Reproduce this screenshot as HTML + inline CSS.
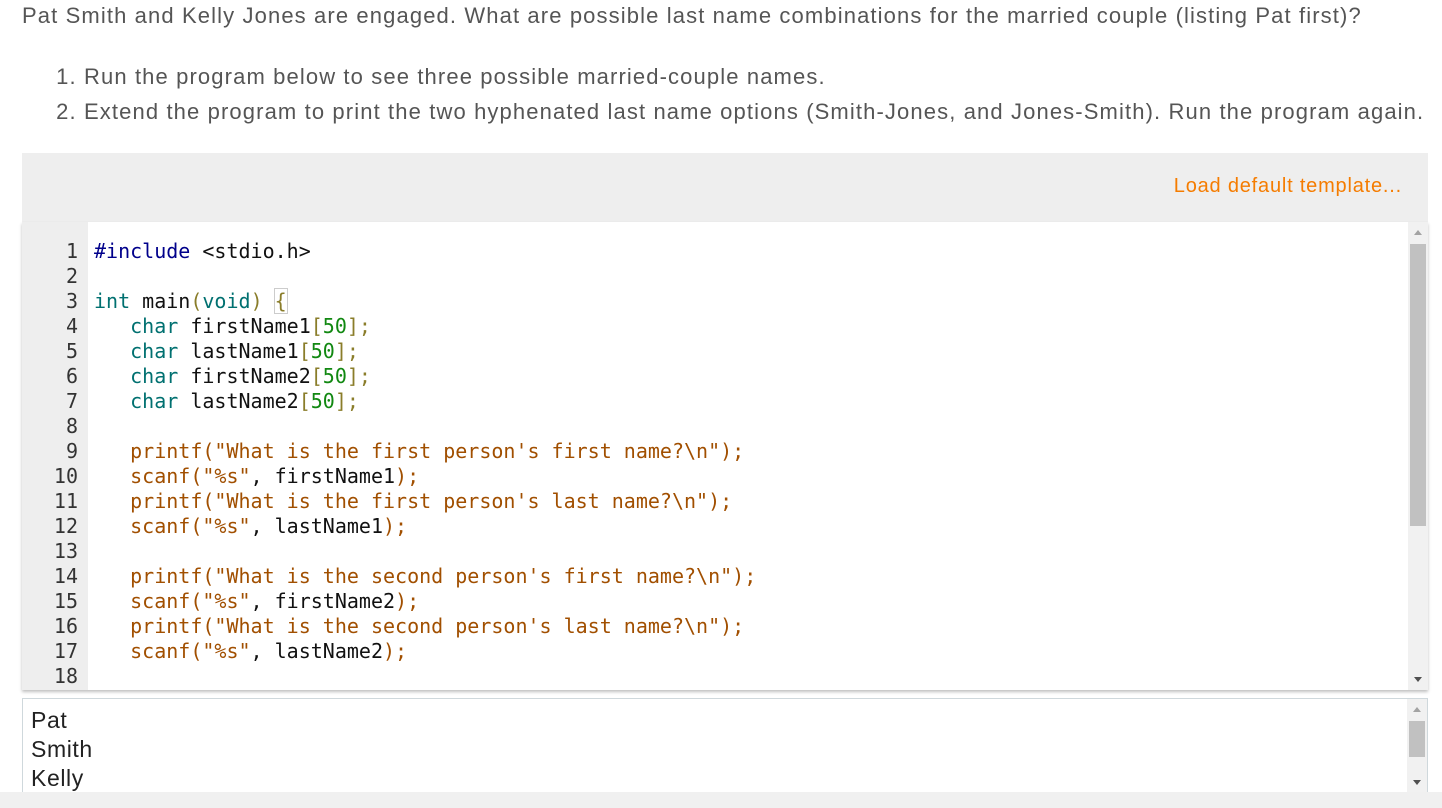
<!DOCTYPE html>
<html><head><style>
body{margin:0;width:1442px;height:808px;overflow:hidden;background:#fff;font-family:"Liberation Sans",sans-serif;color:#333;position:relative}
.q{position:absolute;left:22px;top:3px;font-size:22px;letter-spacing:1.12px;color:#555;white-space:nowrap}
ol{position:absolute;left:40px;top:59px;margin:0;padding-left:44px;font-size:22px;letter-spacing:1.12px;color:#555;line-height:35px;white-space:nowrap}
.hdr{position:absolute;left:22px;top:153px;width:1406px;height:69px;background:#eee}
.hdr span{position:absolute;right:26px;top:22px;color:#f57c00;font-size:20px;letter-spacing:0.8px}
.ed{position:absolute;left:22px;top:222px;width:1406px;height:468px;background:#fff;box-shadow:0 2px 3px rgba(0,0,0,.25);overflow:hidden}
.gut{position:absolute;left:0;top:0;width:66px;height:468px;background:#eee}
pre{margin:0;position:absolute;top:17px;font-family:"DejaVu Sans Mono",monospace;font-size:20px;line-height:25px}
.ln{left:0;width:56px;text-align:right;color:#333}
.cd{left:72px;color:#111}
.k{color:#00008b}.t{color:#007070}.p{color:#8a7d2a}.n{color:#118811}.s{color:#a14f00}
.sb{position:absolute;right:0;top:0;width:20px;height:468px;background:#f1f1f1}
.th{position:absolute;right:2px;top:22px;width:16px;height:282px;background:#c1c1c1}
.up,.dn{position:absolute;right:6px;width:0;height:0;border-left:4px solid transparent;border-right:4px solid transparent}
.up{top:8px;border-bottom:5px solid #a3a3a3}
.dn{bottom:8px;border-top:5px solid #505050}
.out{position:absolute;left:22px;top:698px;width:1404px;height:94px;border:1px solid #cfd8dc;font-size:23px;letter-spacing:0.6px;line-height:29px;color:#222;overflow:hidden}
.out div.tx{padding:7px 8px}
.out .sb{height:94px}.out .th{top:22px;height:36px}
.bot{position:absolute;left:0;top:792px;width:1442px;height:16px;background:#f0f0f0}
</style></head><body>
<div class="q">Pat Smith and Kelly Jones are engaged. What are possible last name combinations for the married couple (listing Pat first)?</div>
<ol><li>Run the program below to see three possible married-couple names.</li><li>Extend the program to print the two hyphenated last name options (Smith-Jones, and Jones-Smith). Run the program again.</li></ol>
<div class="hdr"><span>Load default template...</span></div>
<div class="ed"><div class="gut"></div>
<pre class="ln">1
2
3
4
5
6
7
8
9
10
11
12
13
14
15
16
17
18</pre>
<pre class="cd"><span class="k">#include</span> &lt;stdio.h&gt;

<span class="t">int</span> main<span class="p">(</span><span class="t">void</span><span class="p">)</span> <span class="p" style="outline:1px solid #ccc">{</span>
   <span class="t">char</span> firstName1<span class="p">[</span><span class="n">50</span><span class="p">];</span>
   <span class="t">char</span> lastName1<span class="p">[</span><span class="n">50</span><span class="p">];</span>
   <span class="t">char</span> firstName2<span class="p">[</span><span class="n">50</span><span class="p">];</span>
   <span class="t">char</span> lastName2<span class="p">[</span><span class="n">50</span><span class="p">];</span>

   <span class="s">printf("What is the first person's first name?\n");</span>
   <span class="s">scanf("%s"</span>, firstName1<span class="s">);</span>
   <span class="s">printf("What is the first person's last name?\n");</span>
   <span class="s">scanf("%s"</span>, lastName1<span class="s">);</span>

   <span class="s">printf("What is the second person's first name?\n");</span>
   <span class="s">scanf("%s"</span>, firstName2<span class="s">);</span>
   <span class="s">printf("What is the second person's last name?\n");</span>
   <span class="s">scanf("%s"</span>, lastName2<span class="s">);</span>
</pre>
<div class="sb"><div class="up"></div><div class="th"></div><div class="dn"></div></div></div>
<div class="out"><div class="tx">Pat<br>Smith<br>Kelly</div><div class="sb"><div class="up"></div><div class="th"></div><div class="dn"></div></div></div>
<div class="bot"></div>
</body></html>
